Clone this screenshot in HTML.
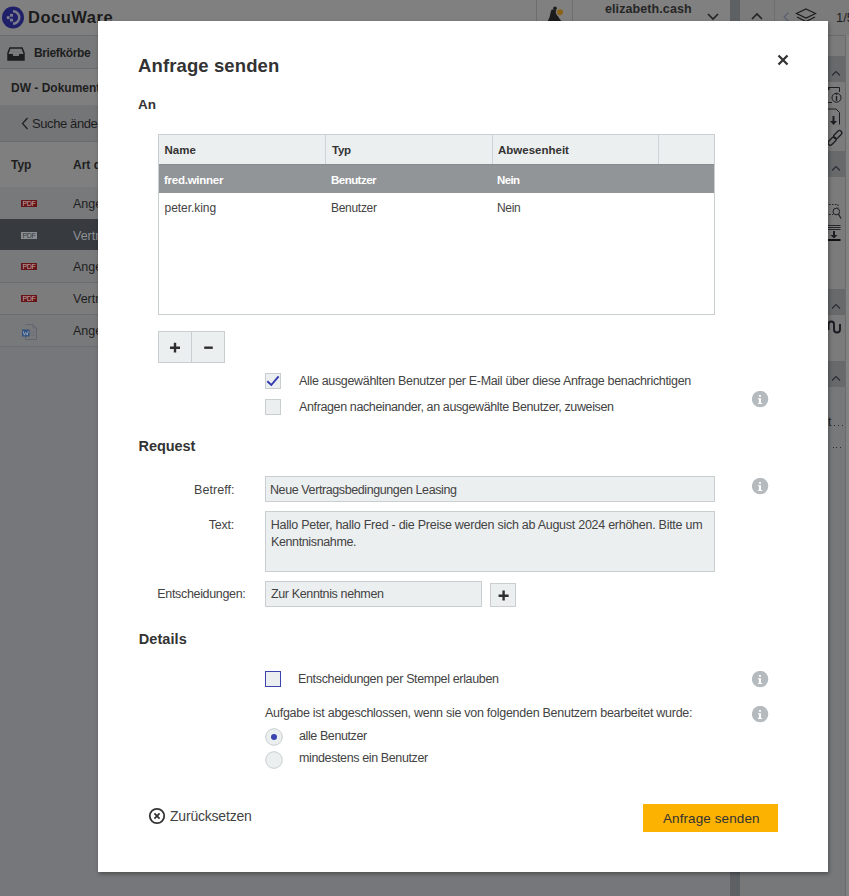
<!DOCTYPE html>
<html><head><meta charset="utf-8"><style>
html,body{margin:0;padding:0;width:849px;height:896px;overflow:hidden;font-family:"Liberation Sans", sans-serif;}
body{position:relative;}
</style></head><body>
<div style="position:absolute;left:0px;top:0px;width:849px;height:896px;background:#76777a"></div>
<div style="position:absolute;left:0px;top:0px;width:849px;height:35px;background:#808080"></div>
<div style="position:absolute;left:0px;top:35px;width:730px;height:1px;background:#6a6b6d"></div>
<svg style="position:absolute;left:2px;top:6px" width="23" height="23" viewBox="0 0 23 23"><circle cx="11" cy="11.5" r="11" fill="#1f2069"/><path d="M11 5.2 A6.3 6.3 0 0 1 11 17.8" stroke="#7b7b8c" stroke-width="2.4" fill="none"/><rect x="8" y="7.9" width="3" height="2.8" fill="#7b7b8c"/><rect x="4.8" y="10.2" width="2.8" height="2.9" fill="#7b7b8c"/><rect x="8" y="12.7" width="3" height="2.8" fill="#7b7b8c"/></svg>
<div style="position:absolute;left:28px;top:9px;font-size:16.5px;line-height:1;font-weight:bold;color:#1b1b1b;white-space:nowrap;letter-spacing:0.527px;">DocuWare</div>
<div style="position:absolute;left:536px;top:0px;width:1px;height:35px;background:#6d6e70"></div>
<div style="position:absolute;left:572px;top:0px;width:1px;height:35px;background:#6d6e70"></div>
<svg style="position:absolute;left:540px;top:0px" width="30" height="22" viewBox="540 0 30 22"><circle cx="555" cy="8.2" r="1.8" fill="#1c1c1c"/><path d="M551.8 9.5 H556.5 C557 12 557.5 16 559 18 C560 19.5 561 20.5 562 21.5 H547.5 C549 19 550 16 550.5 13 C550.8 11.5 551.2 10.2 551.8 9.5Z" fill="#1c1c1c"/><circle cx="560" cy="12.2" r="4.2" fill="#808080"/><circle cx="560" cy="12.2" r="3" fill="#8a6416"/></svg>
<div style="position:absolute;left:605px;top:3px;font-size:12.5px;line-height:1;font-weight:bold;color:#262626;white-space:nowrap;letter-spacing:0.091px;">elizabeth.cash</div>
<svg style="position:absolute;left:707px;top:13px" width="12" height="8" viewBox="0 0 12 8"><path d="M1 1 L6 6 L11 1" stroke="#222" stroke-width="1.6" fill="none"/></svg>
<div style="position:absolute;left:730px;top:0px;width:10px;height:896px;background:#5d6164"></div>
<div style="position:absolute;left:740px;top:35px;width:109px;height:861px;background:#76777a"></div>
<div style="position:absolute;left:740px;top:0px;width:109px;height:35px;background:#7b7b7c"></div>
<div style="position:absolute;left:740px;top:35px;width:109px;height:1px;background:#6a6b6d"></div>
<svg style="position:absolute;left:751px;top:12px" width="12" height="8" viewBox="0 0 12 8"><path d="M1 7 L6 2 L11 7" stroke="#222" stroke-width="1.6" fill="none"/></svg>
<div style="position:absolute;left:774px;top:0px;width:1px;height:35px;background:#6d6e70"></div>
<svg style="position:absolute;left:782px;top:11px" width="8" height="12" viewBox="0 0 8 12"><path d="M6.5 1.5 L2 6 L6.5 10.5" stroke="#5a5f70" stroke-width="1.1" fill="none"/></svg>
<svg style="position:absolute;left:794px;top:6px" width="24" height="16" viewBox="794 6 24 16"><path d="M806 9 L815.5 13.5 L806 18 L796.5 13.5 Z" stroke="#1c1c1c" stroke-width="1.2" fill="none"/><path d="M797 17 L806 21.5 L815 17" stroke="#1c1c1c" stroke-width="1.2" fill="none"/></svg>
<div style="position:absolute;left:836px;top:11px;font-size:13px;line-height:1;font-weight:normal;color:#1e1e1e;white-space:nowrap;">1/5</div>
<div style="position:absolute;left:740px;top:35px;width:105px;height:21px;background:#7b7b7c"></div>
<div style="position:absolute;left:740px;top:56px;width:105px;height:26px;background:#67696b"></div>
<div style="position:absolute;left:740px;top:82px;width:105px;height:69px;background:#7b7b7c"></div>
<div style="position:absolute;left:740px;top:151px;width:105px;height:26px;background:#67696b"></div>
<div style="position:absolute;left:740px;top:177px;width:105px;height:112px;background:#7b7b7c"></div>
<div style="position:absolute;left:740px;top:289px;width:105px;height:26px;background:#67696b"></div>
<div style="position:absolute;left:740px;top:315px;width:105px;height:46px;background:#7b7b7c"></div>
<div style="position:absolute;left:740px;top:361px;width:105px;height:26px;background:#67696b"></div>
<div style="position:absolute;left:740px;top:387px;width:105px;height:509px;background:#77787a"></div>
<div style="position:absolute;left:845px;top:35px;width:1px;height:861px;background:#6a6b6d"></div>
<div style="position:absolute;left:740px;top:35px;width:109px;height:1px;background:#6a6b6d"></div>
<div style="position:absolute;left:846px;top:35px;width:3px;height:861px;background:#828282"></div>
<svg style="position:absolute;left:831px;top:70px" width="10" height="7" viewBox="0 0 10 7"><path d="M1 5.5 L5 1.5 L9 5.5" stroke="#2a2a35" stroke-width="1.1" fill="none"/></svg>
<svg style="position:absolute;left:831px;top:165px" width="10" height="7" viewBox="0 0 10 7"><path d="M1 5.5 L5 1.5 L9 5.5" stroke="#2a2a35" stroke-width="1.1" fill="none"/></svg>
<svg style="position:absolute;left:831px;top:303px" width="10" height="7" viewBox="0 0 10 7"><path d="M1 5.5 L5 1.5 L9 5.5" stroke="#2a2a35" stroke-width="1.1" fill="none"/></svg>
<svg style="position:absolute;left:831px;top:375px" width="10" height="7" viewBox="0 0 10 7"><path d="M1 5.5 L5 1.5 L9 5.5" stroke="#2a2a35" stroke-width="1.1" fill="none"/></svg>
<svg style="position:absolute;left:820px;top:80px" width="25" height="70" viewBox="820 80 25 70"><path d="M826 87.5 H839.5 V92" stroke="#1e1e22" stroke-width="1" fill="none"/><path d="M826 102.5 H832" stroke="#1e1e22" stroke-width="1" fill="none"/><circle cx="836.5" cy="97.7" r="4.5" stroke="#1e1e22" stroke-width="1" fill="none"/><path d="M836.5 96 V100.8" stroke="#1e1e22" stroke-width="1.4"/><rect x="835.8" y="93.6" width="1.4" height="1.4" fill="#1e1e22"/><rect x="827.5" y="88" width="2" height="2" fill="#1e1e22"/><path d="M826 109 H836 L839.5 112.5 V124.5" stroke="#1e1e22" stroke-width="1" fill="none"/><path d="M833.5 116 V121" stroke="#1e1e22" stroke-width="2"/><path d="M830 121 H837 L833.5 125Z" fill="#1e1e22"/><rect x="833" y="132.3" width="9.5" height="4.6" rx="2.3" transform="rotate(-45 837.7 134.6)" stroke="#1e1e22" stroke-width="1.3" fill="none"/><rect x="827.3" y="138.9" width="9.5" height="4.6" rx="2.3" transform="rotate(-45 832 141.2)" stroke="#1e1e22" stroke-width="1.3" fill="none"/></svg>
<svg style="position:absolute;left:820px;top:195px" width="25" height="50" viewBox="820 195 25 50"><path d="M826 204.5 H838 V208 M826 214.5 H833" stroke="#1e1e22" stroke-width="1" stroke-dasharray="1.5 1.5" fill="none"/><circle cx="836.3" cy="211.5" r="3.3" stroke="#1e1e22" stroke-width="1" fill="none"/><path d="M838.5 214 L841 218.5" stroke="#1e1e22" stroke-width="1.2"/><path d="M826 225.5 H840.5 M826 227.5 H840.5 M826 229.5 H840.5" stroke="#1e1e22" stroke-width="0.9"/><path d="M834 231 V235.5" stroke="#1e1e22" stroke-width="2"/><path d="M830.5 235 H837.5 L834 238.5Z" fill="#1e1e22"/><path d="M826 240 H840.5" stroke="#111" stroke-width="2"/></svg>
<svg style="position:absolute;left:820px;top:315px" width="25" height="25" viewBox="820 315 25 25"><path d="M828.5 330 V324.2 A2.75 2.75 0 0 1 834 324.2 V329.5 A3 3 0 0 0 840 329.5 V324" stroke="#1a1a22" stroke-width="1.9" fill="none"/></svg>
<div style="position:absolute;left:828px;top:416px;font-size:12px;line-height:1;font-weight:normal;color:#1e1e22;white-space:nowrap;">t</div>
<div style="position:absolute;left:834px;top:425px;width:1px;height:1px;background:#2a2a33"></div>
<div style="position:absolute;left:838px;top:425px;width:1px;height:1px;background:#2a2a33"></div>
<div style="position:absolute;left:841.5px;top:425px;width:1px;height:1px;background:#2a2a33"></div>
<div style="position:absolute;left:832.5px;top:447px;width:1px;height:1px;background:#2a2a33"></div>
<div style="position:absolute;left:836px;top:447px;width:1px;height:1px;background:#2a2a33"></div>
<div style="position:absolute;left:839.5px;top:447px;width:1px;height:1px;background:#2a2a33"></div>
<div style="position:absolute;left:0px;top:35px;width:730px;height:33px;background:#78797a"></div>
<div style="position:absolute;left:0px;top:35px;width:730px;height:1px;background:#6a6b6d"></div>
<div style="position:absolute;left:0px;top:68px;width:730px;height:1px;background:#6a6b6d"></div>
<div style="position:absolute;left:0px;top:69px;width:730px;height:36px;background:#7f7f80"></div>
<div style="position:absolute;left:0px;top:105px;width:730px;height:36px;background:#747577"></div>
<div style="position:absolute;left:0px;top:141px;width:730px;height:1px;background:#6a6b6d"></div>
<div style="position:absolute;left:0px;top:142px;width:730px;height:45px;background:#7f7f80"></div>
<svg style="position:absolute;left:7px;top:47px" width="18" height="14" viewBox="0 0 18 14"><path d="M3 1 L15 1 L17 6 L17 13 L1 13 L1 6 Z" stroke="#1e1e1e" stroke-width="1.5" fill="none"/><path d="M1 7 L6 7 L6 9 L12 9 L12 7 L17 7 L17 13 L1 13Z" fill="#1e1e1e"/></svg>
<div style="position:absolute;left:34px;top:47px;font-size:12px;line-height:1;font-weight:bold;color:#1e1e1e;white-space:nowrap;letter-spacing:-0.372px;">Briefkörbe</div>
<div style="position:absolute;left:11px;top:82px;font-size:12px;line-height:1;font-weight:bold;color:#1e1e1e;white-space:nowrap;">DW - Dokumente</div>
<svg style="position:absolute;left:21px;top:117px" width="8" height="13" viewBox="0 0 8 13"><path d="M6.5 1 L1.5 6.5 L6.5 12" stroke="#1e1e1e" stroke-width="1.2" fill="none"/></svg>
<div style="position:absolute;left:32px;top:117px;font-size:13px;line-height:1;font-weight:normal;color:#1e1e1e;white-space:nowrap;letter-spacing:-0.4px;">Suche ändern</div>
<div style="position:absolute;left:11px;top:159px;font-size:12px;line-height:1;font-weight:bold;color:#1e1e1e;white-space:nowrap;">Typ</div>
<div style="position:absolute;left:73px;top:159px;font-size:12px;line-height:1;font-weight:bold;color:#1e1e1e;white-space:nowrap;">Art der</div>
<div style="position:absolute;left:0px;top:187px;width:730px;height:32px;background:#78797b"></div>
<div style="position:absolute;left:73px;top:198px;font-size:12.5px;line-height:1;font-weight:normal;color:#1e1e1e;white-space:nowrap;">Angebot</div>
<div style="position:absolute;left:21px;top:200px;width:16px;height:7px;background:#661519"></div>
<div style="position:absolute;left:22.5px;top:200px;font-size:7px;line-height:1;font-weight:normal;color:#c4adad;white-space:nowrap;letter-spacing:-0.362px;">PDF</div>
<div style="position:absolute;left:0px;top:219px;width:730px;height:31px;background:#373a3e"></div>
<div style="position:absolute;left:73px;top:230px;font-size:12.5px;line-height:1;font-weight:normal;color:#8d9094;white-space:nowrap;">Vertrag</div>
<div style="position:absolute;left:21px;top:232px;width:16px;height:7px;background:#8a8d90"></div>
<div style="position:absolute;left:22.5px;top:232px;font-size:7px;line-height:1;font-weight:normal;color:#373a3e;white-space:nowrap;letter-spacing:-0.362px;">PDF</div>
<div style="position:absolute;left:0px;top:250px;width:730px;height:32px;background:#78797b"></div>
<div style="position:absolute;left:73px;top:261px;font-size:12.5px;line-height:1;font-weight:normal;color:#1e1e1e;white-space:nowrap;">Angebot</div>
<div style="position:absolute;left:21px;top:263px;width:16px;height:7px;background:#661519"></div>
<div style="position:absolute;left:22.5px;top:263px;font-size:7px;line-height:1;font-weight:normal;color:#c4adad;white-space:nowrap;letter-spacing:-0.362px;">PDF</div>
<div style="position:absolute;left:0px;top:282px;width:730px;height:32px;background:#7c7c7d"></div>
<div style="position:absolute;left:73px;top:293px;font-size:12.5px;line-height:1;font-weight:normal;color:#1e1e1e;white-space:nowrap;">Vertrag</div>
<div style="position:absolute;left:21px;top:295px;width:16px;height:7px;background:#661519"></div>
<div style="position:absolute;left:22.5px;top:295px;font-size:7px;line-height:1;font-weight:normal;color:#c4adad;white-space:nowrap;letter-spacing:-0.362px;">PDF</div>
<div style="position:absolute;left:0px;top:314px;width:730px;height:32px;background:#78797b"></div>
<div style="position:absolute;left:73px;top:325px;font-size:12.5px;line-height:1;font-weight:normal;color:#1e1e1e;white-space:nowrap;">Angebot</div>
<svg style="position:absolute;left:21px;top:324px" width="17" height="16" viewBox="0 0 17 16"><path d="M4.5 0.5 H12 L15.5 4 V15.5 H4.5 V12" stroke="#5f6670" stroke-width="1" fill="none"/><path d="M12 0.5 V4 H15.5" stroke="#5f6670" stroke-width="0.8" fill="none"/><path d="M9 7.5 H14 M9 9.5 H14 M9 11.5 H14" stroke="#6a7078" stroke-width="0.8"/><rect x="1" y="5.5" width="7.5" height="7" fill="#30507e"/><path d="M2.2 7 L3.3 11.2 L4.7 8.3 L6.1 11.2 L7.3 7" stroke="#9aa6b8" stroke-width="0.9" fill="none"/></svg>
<div style="position:absolute;left:0px;top:282px;width:730px;height:1px;background:#6c6d6f"></div>
<div style="position:absolute;left:0px;top:314px;width:730px;height:1px;background:#6c6d6f"></div>
<div style="position:absolute;left:0px;top:346px;width:730px;height:1px;background:#6c6d6f"></div>
<div style="position:absolute;left:98px;top:21px;width:730px;height:851px;background:#fff;box-shadow:1px 2px 4px rgba(0,0,0,0.35)"></div>
<div style="position:absolute;left:138px;top:57px;font-size:18.5px;line-height:1;font-weight:bold;color:#333;white-space:nowrap;letter-spacing:0.115px;">Anfrage senden</div>
<svg style="position:absolute;left:777px;top:54px" width="12" height="12" viewBox="0 0 12 12"><path d="M1.5 1.5 L10.5 10.5 M10.5 1.5 L1.5 10.5" stroke="#333" stroke-width="2.3"/></svg>
<div style="position:absolute;left:138px;top:98px;font-size:13.5px;line-height:1;font-weight:bold;color:#333;white-space:nowrap;">An</div>
<div style="position:absolute;left:158px;top:134px;width:555px;height:179px;border:1px solid #c9ced1;background:#fff"></div>
<div style="position:absolute;left:159px;top:135px;width:555px;height:29px;background:#eceff0"></div>
<div style="position:absolute;left:325px;top:135px;width:1px;height:29px;background:#ced3d6"></div>
<div style="position:absolute;left:492px;top:135px;width:1px;height:29px;background:#ced3d6"></div>
<div style="position:absolute;left:658px;top:135px;width:1px;height:29px;background:#ced3d6"></div>
<div style="position:absolute;left:159px;top:164px;width:555px;height:29px;background:#919598"></div>
<div style="position:absolute;left:159px;top:164px;width:555px;height:1px;background:#878b8e"></div>
<div style="position:absolute;left:164.5px;top:145px;font-size:11.5px;line-height:1;font-weight:bold;color:#333;white-space:nowrap;letter-spacing:0.025px;">Name</div>
<div style="position:absolute;left:332px;top:145px;font-size:11.5px;line-height:1;font-weight:bold;color:#333;white-space:nowrap;letter-spacing:-0.283px;">Typ</div>
<div style="position:absolute;left:498px;top:145px;font-size:11.5px;line-height:1;font-weight:bold;color:#333;white-space:nowrap;">Abwesenheit</div>
<div style="position:absolute;left:164px;top:175px;font-size:11.5px;line-height:1;font-weight:bold;color:#fff;white-space:nowrap;letter-spacing:-0.251px;">fred.winner</div>
<div style="position:absolute;left:331px;top:175px;font-size:11.5px;line-height:1;font-weight:bold;color:#fff;white-space:nowrap;letter-spacing:-0.532px;">Benutzer</div>
<div style="position:absolute;left:497px;top:175px;font-size:11.5px;line-height:1;font-weight:bold;color:#fff;white-space:nowrap;letter-spacing:-0.632px;">Nein</div>
<div style="position:absolute;left:164.5px;top:202px;font-size:12px;line-height:1;font-weight:normal;color:#434343;white-space:nowrap;letter-spacing:-0.04px;">peter.king</div>
<div style="position:absolute;left:331px;top:202px;font-size:12px;line-height:1;font-weight:normal;color:#434343;white-space:nowrap;letter-spacing:-0.29px;">Benutzer</div>
<div style="position:absolute;left:497px;top:202px;font-size:12px;line-height:1;font-weight:normal;color:#434343;white-space:nowrap;letter-spacing:-0.335px;">Nein</div>
<div style="position:absolute;left:158px;top:331px;width:65px;height:30px;border:1px solid #c9ced1;background:#eceff0"></div>
<div style="position:absolute;left:191px;top:332px;width:1px;height:30px;background:#c9ced1"></div>
<svg style="position:absolute;left:169px;top:341px" width="12" height="13" viewBox="0 0 12 13"><path d="M6 1.8 V11.5 M1 6.7 H11" stroke="#2e2e2e" stroke-width="2.4"/></svg>
<svg style="position:absolute;left:202px;top:341px" width="12" height="13" viewBox="0 0 12 13"><path d="M2.2 6.7 H10.8" stroke="#2e2e2e" stroke-width="2.4"/></svg>
<div style="position:absolute;left:265px;top:373px;width:14px;height:14px;border:1px solid #c9ced1;background:#eceff0"></div>
<svg style="position:absolute;left:265px;top:373px" width="16" height="16" viewBox="0 0 16 16"><path d="M2.3 8.3 L6.3 12 L13.6 3.3" stroke="#3238b0" stroke-width="1.9" fill="none"/></svg>
<div style="position:absolute;left:299px;top:375px;font-size:12.5px;line-height:1;font-weight:normal;color:#434343;white-space:nowrap;letter-spacing:-0.328px;">Alle ausgewählten Benutzer per E-Mail über diese Anfrage benachrichtigen</div>
<div style="position:absolute;left:265px;top:399px;width:14px;height:14px;border:1px solid #c9ced1;background:#eceff0"></div>
<div style="position:absolute;left:299px;top:401px;font-size:12.5px;line-height:1;font-weight:normal;color:#434343;white-space:nowrap;letter-spacing:-0.376px;">Anfragen nacheinander, an ausgewählte Benutzer, zuweisen</div>
<svg style="position:absolute;left:752px;top:391px" width="17" height="17" viewBox="0 0 17 17"><circle cx="8.1" cy="8.1" r="8.2" fill="#b4babe"/><rect x="6.9" y="4.1" width="2.1" height="1.6" fill="#fff"/><path d="M5.9 7.2 H9 V12 H10.2 V13.1 H5.9 V12 H6.9 V8.2 H5.9 Z" fill="#fff"/></svg>
<div style="position:absolute;left:138.5px;top:439px;font-size:14.5px;line-height:1;font-weight:bold;color:#333;white-space:nowrap;letter-spacing:-0.063px;">Request</div>
<div style="position:absolute;left:194px;top:484px;font-size:12.5px;line-height:1;font-weight:normal;color:#434343;white-space:nowrap;letter-spacing:0.058px;">Betreff:</div>
<div style="position:absolute;left:265px;top:476px;width:448px;height:24px;border:1px solid #c9ced1;background:#eceff0"></div>
<div style="position:absolute;left:270px;top:484px;font-size:12.5px;line-height:1;font-weight:normal;color:#434343;white-space:nowrap;letter-spacing:-0.404px;">Neue Vertragsbedingungen Leasing</div>
<svg style="position:absolute;left:752px;top:478px" width="17" height="17" viewBox="0 0 17 17"><circle cx="8.1" cy="8.1" r="8.2" fill="#b4babe"/><rect x="6.9" y="4.1" width="2.1" height="1.6" fill="#fff"/><path d="M5.9 7.2 H9 V12 H10.2 V13.1 H5.9 V12 H6.9 V8.2 H5.9 Z" fill="#fff"/></svg>
<div style="position:absolute;left:208.7px;top:519px;font-size:12.5px;line-height:1;font-weight:normal;color:#434343;white-space:nowrap;letter-spacing:-0.231px;">Text:</div>
<div style="position:absolute;left:265px;top:511px;width:448px;height:59px;border:1px solid #c9ced1;background:#eceff0"></div>
<div style="position:absolute;left:270.8px;top:519px;font-size:12.5px;line-height:1;font-weight:normal;color:#434343;white-space:nowrap;letter-spacing:-0.266px;">Hallo Peter, hallo Fred - die Preise werden sich ab August 2024 erhöhen. Bitte um</div>
<div style="position:absolute;left:271px;top:536px;font-size:12.5px;line-height:1;font-weight:normal;color:#434343;white-space:nowrap;letter-spacing:-0.374px;">Kenntnisnahme.</div>
<div style="position:absolute;left:157.3px;top:588px;font-size:12.5px;line-height:1;font-weight:normal;color:#434343;white-space:nowrap;letter-spacing:-0.332px;">Entscheidungen:</div>
<div style="position:absolute;left:265px;top:581px;width:215px;height:24px;border:1px solid #c9ced1;background:#eceff0"></div>
<div style="position:absolute;left:271px;top:588px;font-size:12.5px;line-height:1;font-weight:normal;color:#434343;white-space:nowrap;letter-spacing:-0.365px;">Zur Kenntnis nehmen</div>
<div style="position:absolute;left:490px;top:583px;width:24px;height:22px;border:1px solid #c9ced1;background:#eceff0"></div>
<svg style="position:absolute;left:497px;top:589px" width="13" height="13" viewBox="0 0 13 13"><path d="M6.6 1.6 V11.4 M1.6 6.7 H11.6" stroke="#2e2e2e" stroke-width="2.4"/></svg>
<div style="position:absolute;left:138.7px;top:632px;font-size:14.5px;line-height:1;font-weight:bold;color:#333;white-space:nowrap;letter-spacing:0.086px;">Details</div>
<div style="position:absolute;left:265px;top:671px;width:14px;height:14px;border:1px solid #3a44b0;background:#eceff0"></div>
<div style="position:absolute;left:298px;top:673px;font-size:12.5px;line-height:1;font-weight:normal;color:#434343;white-space:nowrap;letter-spacing:-0.344px;">Entscheidungen per Stempel erlauben</div>
<svg style="position:absolute;left:752px;top:671px" width="17" height="17" viewBox="0 0 17 17"><circle cx="8.1" cy="8.1" r="8.2" fill="#b4babe"/><rect x="6.9" y="4.1" width="2.1" height="1.6" fill="#fff"/><path d="M5.9 7.2 H9 V12 H10.2 V13.1 H5.9 V12 H6.9 V8.2 H5.9 Z" fill="#fff"/></svg>
<div style="position:absolute;left:265px;top:707px;font-size:12.5px;line-height:1;font-weight:normal;color:#434343;white-space:nowrap;letter-spacing:-0.273px;">Aufgabe ist abgeschlossen, wenn sie von folgenden Benutzern bearbeitet wurde:</div>
<svg style="position:absolute;left:752px;top:706px" width="17" height="17" viewBox="0 0 17 17"><circle cx="8.1" cy="8.1" r="8.2" fill="#b4babe"/><rect x="6.9" y="4.1" width="2.1" height="1.6" fill="#fff"/><path d="M5.9 7.2 H9 V12 H10.2 V13.1 H5.9 V12 H6.9 V8.2 H5.9 Z" fill="#fff"/></svg>
<svg style="position:absolute;left:265px;top:728px" width="18" height="18" viewBox="0 0 18 18"><circle cx="9" cy="9" r="8.3" fill="#eceff0" stroke="#c9ced1" stroke-width="1"/><circle cx="9" cy="9" r="3" fill="#3a44b0"/></svg>
<div style="position:absolute;left:299px;top:730px;font-size:12.5px;line-height:1;font-weight:normal;color:#434343;white-space:nowrap;letter-spacing:-0.4px;">alle Benutzer</div>
<svg style="position:absolute;left:265px;top:751px" width="18" height="18" viewBox="0 0 18 18"><circle cx="9" cy="9" r="8.3" fill="#eceff0" stroke="#c9ced1" stroke-width="1"/></svg>
<div style="position:absolute;left:299px;top:752px;font-size:12.5px;line-height:1;font-weight:normal;color:#434343;white-space:nowrap;letter-spacing:-0.383px;">mindestens ein Benutzer</div>
<svg style="position:absolute;left:148px;top:807px" width="18" height="18" viewBox="0 0 18 18"><circle cx="9" cy="9" r="7.2" fill="none" stroke="#333" stroke-width="1.8"/><path d="M6.4 6.4 L11.6 11.6 M11.6 6.4 L6.4 11.6" stroke="#333" stroke-width="1.8"/></svg>
<div style="position:absolute;left:170px;top:809px;font-size:14px;line-height:1;font-weight:normal;color:#434343;white-space:nowrap;letter-spacing:-0.204px;">Zurücksetzen</div>
<div style="position:absolute;left:643px;top:804px;width:135px;height:28px;background:#fcb200"></div>
<div style="position:absolute;left:663px;top:812px;font-size:13.5px;line-height:1;font-weight:normal;color:#333;white-space:nowrap;letter-spacing:0.091px;">Anfrage senden</div>
</body></html>
